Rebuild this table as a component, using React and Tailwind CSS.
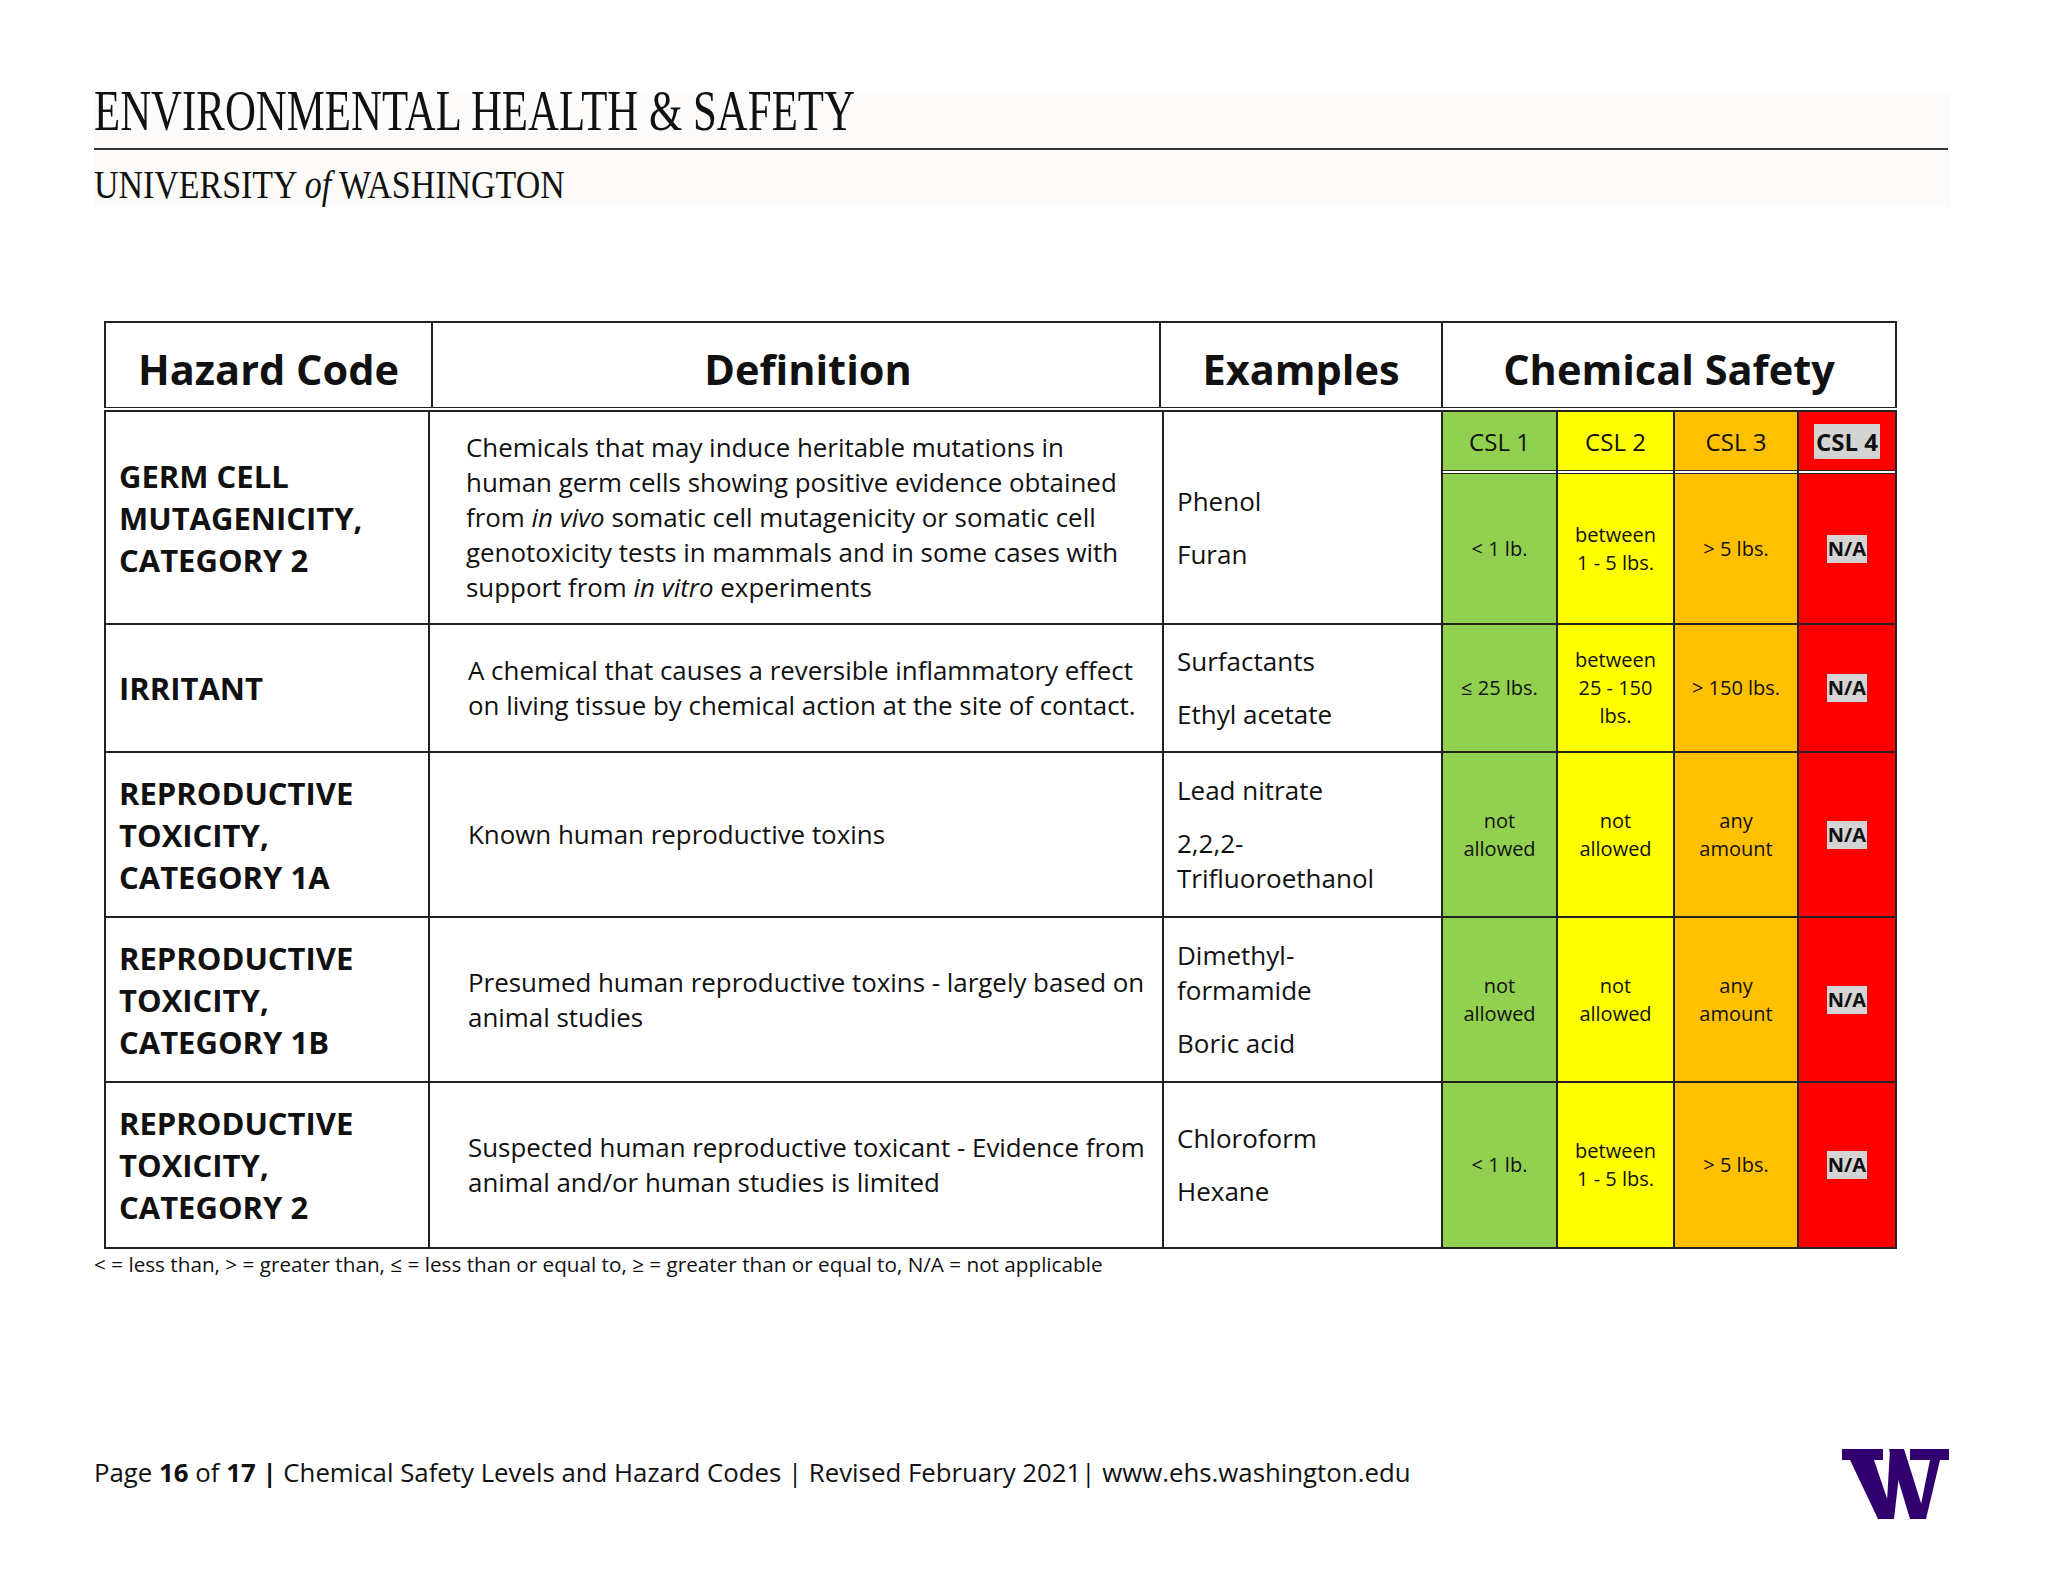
import React from "react";

const hazards = [
  ["GERM CELL", "MUTAGENICITY,", "CATEGORY 2"],
  ["IRRITANT"],
  ["REPRODUCTIVE", "TOXICITY,", "CATEGORY 1A"],
  ["REPRODUCTIVE", "TOXICITY,", "CATEGORY 1B"],
  ["REPRODUCTIVE", "TOXICITY,", "CATEGORY 2"],
];

const defs = [
  [
    "Chemicals that may induce heritable mutations in",
    "human germ cells showing positive evidence obtained",
    <>from <i>in vivo</i> somatic cell mutagenicity or somatic cell</>,
    "genotoxicity tests in mammals and in some cases with",
    <>support from <i>in vitro</i> experiments</>,
  ],
  [
    "A chemical that causes a reversible inflammatory effect",
    "on living tissue by chemical action at the site of contact.",
  ],
  ["Known human reproductive toxins"],
  ["Presumed human reproductive toxins - largely based on", "animal studies"],
  ["Suspected human reproductive toxicant - Evidence from", "animal and/or human studies is limited"],
];

const examples = [
  [["Phenol"], ["Furan"]],
  [["Surfactants"], ["Ethyl acetate"]],
  [["Lead nitrate"], ["2,2,2-", "Trifluoroethanol"]],
  [["Dimethyl-", "formamide"], ["Boric acid"]],
  [["Chloroform"], ["Hexane"]],
];

const csl = [
  [["< 1 lb."], ["between", "1 - 5 lbs."], ["> 5 lbs."]],
  [["\u2264 25 lbs."], ["between", "25 - 150", "lbs."], ["> 150 lbs."]],
  [["not", "allowed"], ["not", "allowed"], ["any", "amount"]],
  [["not", "allowed"], ["not", "allowed"], ["any", "amount"]],
  [["< 1 lb."], ["between", "1 - 5 lbs."], ["> 5 lbs."]],
];

const cell = "border-r-2 border-b-2 border-[#222]";

function Lines({ lines }) {
  return lines.map((l, i) => (
    <div key={i} className="whitespace-nowrap">
      {l}
    </div>
  ));
}

function WLogo() {
  return (
    <svg width="107" height="70" viewBox="0 0 107 70" fill="#32006e">
      <rect x="0" y="0" width="41" height="11" />
      <rect x="68" y="0" width="39" height="11" />
      <polygon points="8,11 32,11 52,70 36,70" />
      <polygon points="44,70 52,70 60,0 48,0" />
      <polygon points="47,0 62,0 84,70 68,70" />
      <polygon points="76,70 84,70 98,11 88,11" />
    </svg>
  );
}

function CslHead({ color, children }) {
  return (
    <div className="border-r-2 border-b border-[#222] flex flex-col">
      <div className={`flex-1 ${color} flex items-center justify-center text-[24px] leading-[35px]`}>{children}</div>
      <div className="h-[1px] bg-[#222]" />
      <div className="h-[2px] bg-white" />
    </div>
  );
}

function Row({ i }) {
  const first = i === 0;
  const span = first ? "row-span-2" : "";
  return (
    <>
      <div className={`${cell} ${span} flex flex-col justify-center pl-[13px] text-[31px] leading-[42px] font-bold`}>
        <Lines lines={hazards[i]} />
      </div>
      <div className={`${cell} ${span} flex flex-col justify-center ${first ? "pl-[36px]" : "pl-[38px]"} text-[25.9px] leading-[35px]`}>
        <Lines lines={defs[i]} />
      </div>
      <div className={`${cell} ${span} flex flex-col justify-center gap-[18px] pl-[13px] text-[26px] leading-[35px] ${first ? "pt-[20px]" : ""}`}>
        {examples[i].map((p, k) => (
          <div key={k}>
            <Lines lines={p} />
          </div>
        ))}
      </div>
      {first && (
        <>
          <CslHead color="bg-[#92d050]">CSL 1</CslHead>
          <CslHead color="bg-[#ffff00]">CSL 2</CslHead>
          <CslHead color="bg-[#ffc000]">CSL 3</CslHead>
          <CslHead color="bg-[#ff0000]">
            <span className="inline-block bg-[#d4d4d4] font-bold leading-[35px] px-[2px]">CSL 4</span>
          </CslHead>
        </>
      )}
      <div className={`${cell} bg-[#92d050] flex flex-col items-center justify-center text-center text-[20px] leading-[28px]`}>
        <Lines lines={csl[i][0]} />
      </div>
      <div className={`${cell} bg-[#ffff00] flex flex-col items-center justify-center text-center text-[20px] leading-[28px]`}>
        <Lines lines={csl[i][1]} />
      </div>
      <div className={`${cell} bg-[#ffc000] flex flex-col items-center justify-center text-center text-[20px] leading-[28px]`}>
        <Lines lines={csl[i][2]} />
      </div>
      <div className={`${cell} bg-[#ff0000] flex flex-col items-center justify-center text-center text-[20px] leading-[28px]`}>
        <span className="bg-[#d4d4d4] font-bold px-[1px]">N/A</span>
      </div>
    </>
  );
}

export default function App() {
  return (
    <div className="w-[2048px] h-[1582px] bg-white overflow-hidden font-['Open_Sans',sans-serif] text-[#111]">
      {/* Letterhead */}
      <div className="ml-[94px] mt-[92px] w-[1857px] bg-[#fcfbf9] pb-[7px]">
        <div className="h-[38px] leading-[38px] text-[56px] font-['Liberation_Serif',serif] text-[#111] whitespace-nowrap">
          <span className="inline-block origin-left scale-x-[0.765]">ENVIRONMENTAL HEALTH &amp; SAFETY</span>
        </div>
        <div className="mt-[18px] h-[2px] w-[1854px] bg-[#333]" />
        <div className="mt-[20px] h-[30px] leading-[30px] text-[39px] font-['Liberation_Serif',serif] text-[#111] whitespace-nowrap">
          <span className="inline-block origin-left scale-x-[0.87]">
            UNIVERSITY <i>of</i> WASHINGTON
          </span>
        </div>
      </div>

      {/* Table */}
      <div className="ml-[104px] mt-[114px] w-[1793px]">
        <div className="grid grid-cols-[327px_728px_282px_454px] h-[87px] border-l-2 border-t-2 border-b border-[#222] text-[41.5px] font-bold">
          <div className="border-r-2 border-[#222] flex items-center justify-center pt-[8px]">Hazard Code</div>
          <div className="border-r-2 border-[#222] flex items-center justify-center pt-[8px] pl-[24px]">Definition</div>
          <div className="border-r-2 border-[#222] flex items-center justify-center pt-[8px]">Examples</div>
          <div className="border-r-2 border-[#222] flex items-center justify-center pt-[8px]">Chemical Safety</div>
        </div>
        <div className="mt-[2px] grid grid-cols-[324px_734px_279px_115px_117px_124px_98px] grid-rows-[62px_151px_128px_165px_165px_166px] border-l-2 border-t-2 border-[#222]">
          {hazards.map((_, i) => (
            <Row key={i} i={i} />
          ))}
        </div>
      </div>

      <div className="mt-[1px] pl-[94px] text-[20.7px] leading-[28px] whitespace-nowrap">
        &lt; = less than, &gt; = greater than, &le; = less than or equal to, &ge; = greater than or equal to, N/A = not applicable
      </div>

      {/* Footer */}
      <div className="mt-[171px] pl-[94px] pr-[99px] flex justify-between items-start">
        <div className="mt-[6px] text-[25.8px] leading-[34px] whitespace-nowrap">
          Page <b>16</b> of <b>17</b> <b>|</b> Chemical Safety Levels and Hazard Codes | Revised February 2021| www.ehs.washington.edu
        </div>
        <WLogo />
      </div>
    </div>
  );
}
